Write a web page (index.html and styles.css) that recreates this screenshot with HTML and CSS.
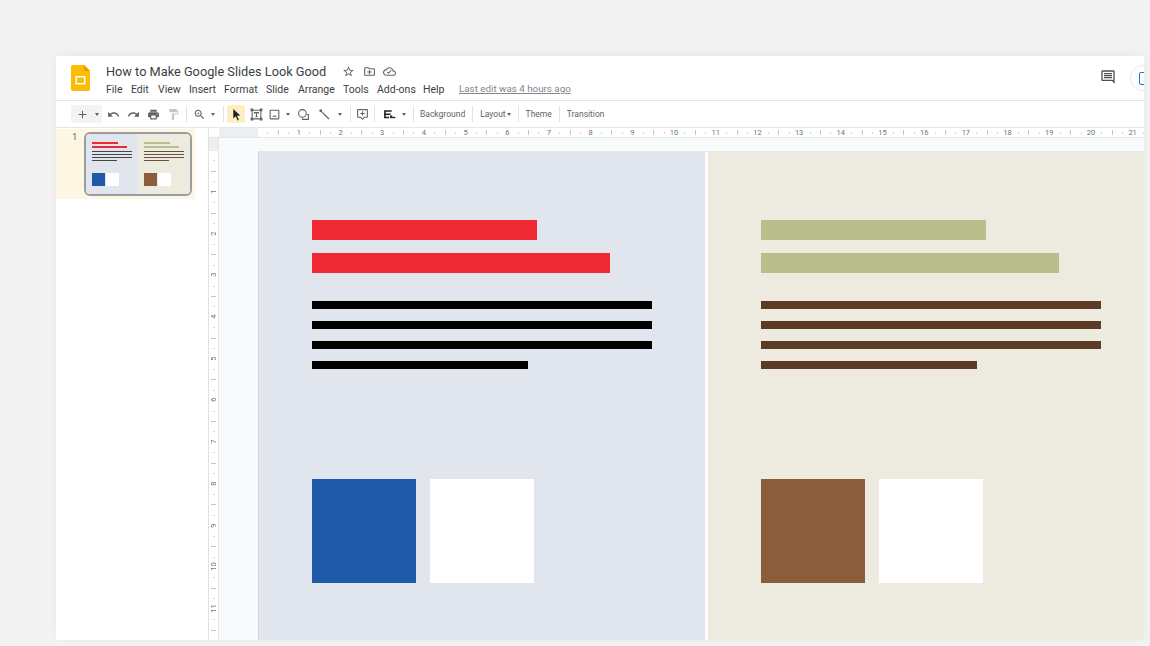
FILE: index.html
```html
<!DOCTYPE html>
<html lang="en">
<head>
    <meta charset="UTF-8">
    <meta name="viewport" content="width=device-width, initial-scale=1.0">
    <title>How to Make Google Slides Look Good</title>
    <link rel="stylesheet" href="styles.css">
</head>
<body>
    <div class="window">
        <header class="topbar">
            <svg class="logo" viewBox="0 0 19 26">
                <path d="M2 0h11l6 6v18a2 2 0 0 1-2 2H2a2 2 0 0 1-2-2V2a2 2 0 0 1 2-2z" fill="#fbbc04"/>
                <path d="M13 0l6 6h-4.500a1.500 1.500 0 0 1-1.500-1.500z" fill="#f29900"/>
                <path d="M4.500 11h10v8.500h-10z M6 12.500v5.500h7v-5.500z" fill="#fff" fill-rule="evenodd"/>
            </svg>
            <div class="doc-info">
                <div class="title-row">
                    <span class="doc-title">How to Make Google Slides Look Good</span>
                    <svg class="title-icon star" viewBox="0 0 24 24"><path d="M22 9.240l-7.190-.620L12 2 9.190 8.630 2 9.240l5.460 4.730L5.820 21 12 17.270 18.180 21l-1.630-7.030L22 9.240zM12 15.400l-3.760 2.270 1-4.280-3.320-2.880 4.380-.380L12 6.100l1.710 4.040 4.380.380-3.320 2.880 1 4.280L12 15.400z"/></svg>
                    <svg class="title-icon folder" viewBox="0 0 24 24"><path d="M20 6h-8l-2-2H4c-1.100 0-2 .900-2 2v12c0 1.100.900 2 2 2h16c1.100 0 2-.900 2-2V8c0-1.100-.900-2-2-2zm0 12H4V6h5.170l2 2H20v10zm-9-1h2v-3h3v-2h-3V9h-2v3H8v2h3z"/></svg>
                    <svg class="title-icon cloud" viewBox="0 0 24 24"><path d="M19.350 10.040C18.670 6.590 15.640 4 12 4 9.110 4 6.600 5.640 5.350 8.040 2.340 8.360 0 10.910 0 14c0 3.310 2.690 6 6 6h13c2.760 0 5-2.240 5-5 0-2.640-2.050-4.780-4.650-4.960zM19 18H6c-2.210 0-4-1.790-4-4 0-2.050 1.530-3.760 3.560-3.970l1.070-.110.500-.950C8.080 7.140 9.940 6 12 6c2.620 0 4.880 1.860 5.390 4.430l.300 1.500 1.530.110c1.560.100 2.780 1.410 2.780 2.960 0 1.650-1.350 3-3 3zm-9-1.500l-3-3 1.400-1.400 1.600 1.600 4.600-4.600 1.400 1.400z"/></svg>
                </div>
                <nav class="menu">
                    <span class="menu-file">File</span>
                    <span class="menu-edit">Edit</span>
                    <span class="menu-view">View</span>
                    <span class="menu-insert">Insert</span>
                    <span class="menu-format">Format</span>
                    <span class="menu-slide">Slide</span>
                    <span class="menu-arrange">Arrange</span>
                    <span class="menu-tools">Tools</span>
                    <span class="menu-addons">Add-ons</span>
                    <span class="menu-help">Help</span>
                    <span class="last-edit">Last edit was 4 hours ago</span>
                </nav>
            </div>
            <svg class="comments" viewBox="0 0 24 24"><path d="M20 2H4c-1.100 0-2 .900-2 2v12c0 1.100.900 2 2 2h14l4 4V4c0-1.100-.900-2-2-2zm0 15.170L18.830 16H4V4h16v13.170zM6 12h12v2H6zm0-3h12v2H6zm0-3h12v2H6z"/></svg>
            <div class="present-btn"><span class="present-icon"></span></div>
        </header>

        <div class="toolbar">
            <div class="new-group">
                <button class="tool"><svg viewBox="0 0 24 24"><path d="M19 13h-6v6h-2v-6H5v-2h6V5h2v6h6v2z"/></svg></button>
                <span class="caret"></span>
            </div>
            <button class="tool"><svg viewBox="0 0 24 24"><path d="M12.500 8c-2.650 0-5.050.990-6.900 2.600L2 7v9h9l-3.620-3.620c1.390-1.160 3.160-1.880 5.120-1.880 3.540 0 6.550 2.310 7.600 5.500l2.370-.780C21.080 11.030 17.150 8 12.500 8z"/></svg></button>
            <button class="tool"><svg viewBox="0 0 24 24"><path d="M18.400 10.600C16.550 8.990 14.150 8 11.500 8c-4.650 0-8.580 3.030-9.960 7.220L3.900 16c1.050-3.190 4.050-5.500 7.600-5.500 1.950 0 3.730.720 5.120 1.880L13 16h9V7l-3.600 3.600z"/></svg></button>
            <button class="tool"><svg viewBox="0 0 24 24"><path d="M19 8H5c-1.660 0-3 1.340-3 3v6h4v4h12v-4h4v-6c0-1.660-1.340-3-3-3zm-3 11H8v-5h8v5zm3-7c-.550 0-1-.450-1-1s.450-1 1-1 1 .450 1 1-.450 1-1 1zm-1-9H6v4h12V3z"/></svg></button>
            <button class="tool faded"><svg viewBox="0 0 24 24"><path d="M18 4V3c0-.550-.450-1-1-1H5c-.550 0-1 .450-1 1v4c0 .550.450 1 1 1h12c.550 0 1-.450 1-1V6h1v4H9v11c0 .550.450 1 1 1h2c.550 0 1-.450 1-1v-9h8V4h-3z"/></svg></button>
            <span class="sep sep-history"></span>
            <button class="tool"><svg viewBox="0 0 24 24"><path d="M15.500 14h-.790l-.280-.270C15.410 12.590 16 11.110 16 9.500 16 5.910 13.090 3 9.500 3S3 5.910 3 9.500 5.910 16 9.500 16c1.610 0 3.090-.590 4.230-1.570l.270.280v.790l5 4.990L20.490 19l-4.990-5zm-6 0C7.010 14 5 11.990 5 9.500S7.010 5 9.500 5 14 7.010 14 9.500 11.990 14 9.500 14zM12 10h-2v2H9v-2H7V9h2V7h1v2h2v1z"/></svg></button>
            <span class="caret"></span>
            <span class="sep sep-zoom"></span>
            <button class="tool active"><svg viewBox="0 0 24 24"><path d="M6 2l13 12-6 .500 3.500 7.500-2.500 1-3.300-7.600L6 19.500z"/></svg></button>
            <button class="tool text-tool"><svg viewBox="0 0 24 24"><path d="M1 1h5v2h12V1h5v5h-2v12h2v5h-5v-2H6v2H1v-5h2V6H1V1zm5 4v1H5v12h1v1h12v-1h1V6h-1V5H6zm1.500 2.500h9v3H15V9.500h-2v6h1.500V17h-5v-1.500H11v-6H9v1.500H7.500z" fill-rule="evenodd"/></svg></button>
            <button class="tool image-tool"><svg viewBox="0 0 24 24"><path d="M19 3H5c-1.100 0-2 .900-2 2v14c0 1.100.900 2 2 2h14c1.100 0 2-.900 2-2V5c0-1.100-.900-2-2-2zm0 16H5V5h14v14zM8 16l2-2.500 1.500 1.800 2-2.600L16 16z"/></svg></button>
            <span class="caret"></span>
            <button class="tool shape-tool"><svg viewBox="0 0 24 24"><path d="M10 2a8 8 0 1 1 0 16 8 8 0 0 1 0-16zm0 2a6 6 0 1 0 0 12 6 6 0 0 0 0-12z" fill-rule="evenodd"/><path d="M18.500 11H22v11H9v-3h2v1h9v-7h-1.500z"/></svg></button>
            <button class="tool line-tool"><svg viewBox="0 0 24 24"><path d="M4.500 3L21 19.500 19.500 21 3 4.500z"/><circle cx="5" cy="5" r="2.500"/></svg></button>
            <span class="caret"></span>
            <span class="sep sep-line"></span>
            <button class="tool"><svg viewBox="0 0 24 24"><path d="M20 2H4c-1.100 0-2 .900-2 2v12c0 1.100.900 2 2 2h4l4 4 4-4h4c1.100 0 2-.900 2-2V4c0-1.100-.900-2-2-2zm0 14h-4.830L12 19.170 8.830 16H4V4h16v12zm-9-2h2v-3h3V9h-3V6h-2v3H8v2h3z"/></svg></button>
            <span class="sep sep-comment"></span>
            <button class="tool border-tool"><svg viewBox="0 0 24 24"><path d="M2 4h14v3H5v3h9v3H5v3h6v3H2zM13 14h4v2h4a2 2 0 0 1 2 2v1h-3v-1h-1v1h-2v-1h-1v1h-3z"/></svg></button>
            <span class="caret"></span>
            <span class="sep sep-border"></span>
            <span class="tool-text">Background</span>
            <span class="sep"></span>
            <span class="tool-text">Layout<span class="mini-caret"></span></span>
            <span class="sep"></span>
            <span class="tool-text">Theme</span>
            <span class="sep"></span>
            <span class="tool-text">Transition</span>
        </div>

        <div class="main">
            <aside class="filmstrip">
                <div class="slide-row">
                    <span class="slide-num">1</span>
                    <div class="thumb">
                        <div class="thumb-half thumb-left">
                            <i class="tb tb-short"></i>
                            <i class="tb tb-long"></i>
                            <i class="tl tl-first"></i>
                            <i class="tl"></i>
                            <i class="tl"></i>
                            <i class="tl tl-last"></i>
                            <div class="thumb-squares"><i class="ts ts-color"></i><i class="ts ts-white"></i></div>
                        </div>
                        <div class="thumb-half thumb-right">
                            <i class="tb tb-short"></i>
                            <i class="tb tb-long"></i>
                            <i class="tl tl-first"></i>
                            <i class="tl"></i>
                            <i class="tl"></i>
                            <i class="tl tl-last"></i>
                            <div class="thumb-squares"><i class="ts ts-color"></i><i class="ts ts-white"></i></div>
                        </div>
                    </div>
                </div>
            </aside>

            <div class="editor">
                <div class="h-ruler">
                    <span>1</span><span>2</span><span>3</span><span>4</span><span>5</span><span>6</span><span>7</span>
                    <span>8</span><span>9</span><span>10</span><span>11</span><span>12</span><span>13</span><span>14</span>
                    <span>15</span><span>16</span><span>17</span><span>18</span><span>19</span><span>20</span><span>21</span>
                </div>
                <div class="editor-body">
                    <div class="v-ruler">
                        <span>1</span><span>2</span><span>3</span><span>4</span><span>5</span><span>6</span>
                        <span>7</span><span>8</span><span>9</span><span>10</span><span>11</span>
                    </div>
                    <div class="canvas">
                        <div class="slide">
                            <section class="panel panel-cool">
                                <div class="bar bar-short"></div>
                                <div class="bar bar-long"></div>
                                <div class="line line-first"></div>
                                <div class="line"></div>
                                <div class="line"></div>
                                <div class="line line-last"></div>
                                <div class="squares">
                                    <div class="square square-color"></div>
                                    <div class="square square-white"></div>
                                </div>
                            </section>
                            <section class="panel panel-warm">
                                <div class="bar bar-short"></div>
                                <div class="bar bar-long"></div>
                                <div class="line line-first"></div>
                                <div class="line"></div>
                                <div class="line"></div>
                                <div class="line line-last"></div>
                                <div class="squares">
                                    <div class="square square-color"></div>
                                    <div class="square square-white"></div>
                                </div>
                            </section>
                        </div>
                    </div>
                </div>
            </div>
        </div>
    </div>
</body>
</html>
```

FILE: styles.css
```css
* {
    box-sizing: border-box;
}

body {
    margin: 0;
    height: 646px;
    padding: 56px 6px 6px 56px;
    background-color: #f3f3f3;
    font-family: Roboto, "Liberation Sans", sans-serif;
    overflow: hidden;
}

.window {
    height: 584px;
    display: flex;
    flex-direction: column;
    background-color: white;
    box-shadow: 0 -2px 10px rgba(0, 0, 0, 0.05);
    overflow: hidden;
}

/* top bar */
.topbar {
    height: 45px;
    flex: none;
    display: flex;
    align-items: flex-start;
    padding-left: 15px;
    border-bottom: 1px solid #e4e6e8;
}

.logo {
    width: 19px;
    height: 26px;
    margin-top: 9px;
    flex: none;
}

.doc-info {
    margin-left: 16px;
    flex: 1;
}

.title-row {
    display: flex;
    align-items: center;
    height: 16px;
    margin-top: 7px;
}

.doc-title {
    font-size: 12.75px;
    color: #3c4043;
    width: 236px;
    white-space: nowrap;
}

.title-icon {
    width: 13px;
    height: 13px;
    fill: #5f6368;
    flex: none;
}

.folder {
    margin-left: 8px;
}

.cloud {
    margin-left: 7px;
}

.menu {
    height: 14px;
    margin-top: 4px;
    display: flex;
    font-size: 10.5px;
    line-height: 14px;
    color: #3c4043;
    white-space: nowrap;
}

.menu-file { width: 25px; }
.menu-edit { width: 27px; }
.menu-view { width: 31px; }
.menu-insert { width: 35px; }
.menu-format { width: 42px; }
.menu-slide { width: 32px; }
.menu-arrange { width: 45px; }
.menu-tools { width: 34px; }
.menu-addons { width: 46px; }
.menu-help { width: 36px; }

.last-edit {
    margin-top: -1px;
    color: #80868b;
    text-decoration: underline;
    font-size: 9.8px;
}

.comments {
    width: 16px;
    height: 16px;
    margin-top: 13px;
    fill: #4c5053;
    flex: none;
}

.present-btn {
    width: 26px;
    height: 26px;
    margin: 9px -12px 0 14px;
    flex: none;
    border: 1px solid #e8eaed;
    border-radius: 50%;
    display: flex;
    align-items: center;
    padding-left: 8px;
}

.present-icon {
    width: 10px;
    height: 13px;
    border: 1.500px solid #1a73e8;
    border-radius: 2px;
}

/* toolbar */
.toolbar {
    height: 27px;
    flex: none;
    display: flex;
    align-items: center;
    padding-left: 15px;
    border-bottom: 1px solid #e4e6e8;
}

.tool {
    width: 20px;
    height: 18px;
    padding: 0;
    border: none;
    background: none;
    display: flex;
    align-items: center;
    justify-content: center;
    flex: none;
}

.tool svg {
    width: 13px;
    height: 13px;
    fill: #5f6368;
}

.faded svg {
    fill: #c4c7ca;
}

.new-group {
    width: 31px;
    height: 18px;
    display: flex;
    align-items: center;
    background-color: #f1f3f4;
    border-radius: 2px;
    margin-right: 1px;
}

.new-group .tool {
    width: 22px;
}

.caret {
    width: 0;
    height: 0;
    flex: none;
    margin-left: 2px;
    margin-right: 1px;
    border-left: 2.500px solid transparent;
    border-right: 2.500px solid transparent;
    border-top: 3px solid #5f6368;
}

.sep {
    width: 1px;
    height: 16px;
    margin: 0 7px;
    flex: none;
    background-color: #e2e4e6;
}

.sep-history {
    margin: 0 2px 0 3px;
}

.sep-zoom {
    margin: 0 3px 0 7px;
}

.active {
    width: 18px;
    background-color: #feefc3;
    border-radius: 2px;
}

.active svg {
    fill: #202124;
}

.text-tool {
    margin-left: 1px;
}

.image-tool {
    margin-left: -2px;
}

.shape-tool {
    margin-left: 2px;
}

.line-tool {
    margin-left: 1px;
    margin-right: 2px;
}

.sep-line {
    margin: 0 1px 0 7px;
}

.sep-comment {
    margin: 0 4px 0 2px;
}

.border-tool {
    margin-right: 1px;
}

.border-tool svg {
    fill: #202124;
}

.sep-border {
    margin: 0 6px 0 6px;
}

.tool-text {
    font-size: 8.5px;
    color: #5f6368;
    white-space: nowrap;
    flex: none;
}

.mini-caret {
    display: inline-block;
    margin-left: 1px;
    vertical-align: middle;
    border-left: 2.500px solid transparent;
    border-right: 2.500px solid transparent;
    border-top: 3px solid #5f6368;
}

/* main area */
.main {
    flex: 1;
    min-height: 0;
    display: flex;
}

.filmstrip {
    width: 153px;
    flex: none;
    border-right: 1px solid #dfe1e3;
}

.slide-row {
    width: 139px;
    height: 70px;
    margin-top: 1px;
    padding: 3px 0 0 28px;
    position: relative;
    background-color: #fdf6e3;
}

.slide-num {
    position: absolute;
    left: 16px;
    top: 2px;
    font-size: 9.5px;
    color: #5f6368;
}

.thumb {
    width: 108px;
    height: 64px;
    display: flex;
    border: 2px solid #9a9ea1;
    border-radius: 6px;
    overflow: hidden;
    filter: blur(0.35px);
}

.thumb-half {
    width: 50%;
    padding: 8px 0 0 6px;
}

.thumb i {
    display: block;
}

.thumb-left {
    background-color: #e1e5ee;
}

.thumb-right {
    background-color: #edebdf;
}

.tb {
    height: 2px;
    margin-bottom: 2px;
}

.tb-short { width: 26px; }
.tb-long { width: 35px; }

.tl {
    width: 40px;
    height: 1px;
    margin-bottom: 2px;
}

.tl-first { margin-top: 3px; }
.tl-last { width: 25px; }

.thumb-left .tb { background-color: #f02a35; }
.thumb-right .tb { background-color: #b9bf8c; }
.thumb-left .tl { background-color: #444; }
.thumb-right .tl { background-color: #6b4f3c; }

.thumb-squares {
    display: flex;
    gap: 1px;
    margin-top: 12px;
}

.ts {
    width: 13px;
    height: 13px;
}

.thumb-left .ts-color { background-color: #2059a8; }
.thumb-right .ts-color { background-color: #8a5e3c; }
.ts-white { background-color: white; }

/* rulers */
.editor {
    flex: 1;
    min-width: 0;
    display: flex;
    flex-direction: column;
}

.h-ruler {
    height: 10px;
    flex: none;
    display: flex;
    padding-left: 69px;
    border-bottom: 1px solid #e4e6e8;
    background:
        repeating-linear-gradient(to right, transparent 0, transparent 19.85px, #c4c7ca 19.85px, #c4c7ca 20.85px) 49.3px center / 100% 5px no-repeat,
        repeating-linear-gradient(to right, transparent 0, transparent 9.425px, #d4d6d8 9.425px, #d4d6d8 10.425px) 49.3px center / 100% 2px no-repeat,
        linear-gradient(to right, white 10px, #eceeef 10px, #eceeef 49px, white 49px);
    overflow: hidden;
}

.h-ruler span {
    flex: 0 0 41.7px;
    text-align: center;
    font-size: 7.5px;
    line-height: 9px;
    color: #6f7376;
    background: linear-gradient(white, white) center / 11px 100% no-repeat;
}

.editor-body {
    flex: 1;
    min-height: 0;
    display: flex;
}

.v-ruler {
    width: 10px;
    flex: none;
    display: flex;
    flex-direction: column;
    padding-top: 33px;
    border-right: 1px solid #e4e6e8;
    background:
        repeating-linear-gradient(to bottom, transparent 0, transparent 19.85px, #c4c7ca 19.85px, #c4c7ca 20.85px) center 13.3px / 5px 100% no-repeat,
        repeating-linear-gradient(to bottom, transparent 0, transparent 9.425px, #d4d6d8 9.425px, #d4d6d8 10.425px) center 13.3px / 2px 100% no-repeat,
        linear-gradient(to bottom, #eceeef 13px, white 13px);
    overflow: hidden;
}

.v-ruler span {
    flex: 0 0 41.7px;
    writing-mode: vertical-rl;
    transform: rotate(180deg);
    text-align: center;
    font-size: 7.5px;
    line-height: 9px;
    color: #6f7376;
    background: linear-gradient(white, white) center / 100% 11px no-repeat;
}

/* slide */
.canvas {
    flex: 1;
    min-width: 0;
    padding: 13px 0 0 39px;
    background-color: #f8fbfc;
}

.slide {
    height: 100%;
    display: flex;
    background-color: white;
    border-left: 1px solid #d5d8d6;
    border-top: 1px solid #e6e8e8;
}

.panel {
    padding: 68px 0 0 53px;
}

.panel-cool {
    width: 446px;
    margin-right: 3px;
    background-color: #e1e5ee;
}

.panel-warm {
    flex: 1;
    background-color: #edebdf;
}

.bar {
    height: 20px;
    margin-bottom: 13px;
}

.bar-short { width: 225px; }
.bar-long { width: 298px; }

.line {
    width: 339.5px;
    height: 8px;
    margin-bottom: 12px;
}

.line-first { margin-top: 28px; }
.line-last { width: 216px; }

.panel-cool .bar { background-color: #f02a35; }
.panel-warm .bar { background-color: #b9bf8c; }
.panel-cool .line { background-color: black; }
.panel-warm .line { background-color: #5b3a26; }

.squares {
    display: flex;
    gap: 13.5px;
    margin-top: 110px;
}

.square {
    width: 104px;
    height: 104px;
}

.panel-cool .square-color { background-color: #2059a8; }
.panel-warm .square-color { background-color: #8a5e3c; }
.square-white { background-color: white; }
```
